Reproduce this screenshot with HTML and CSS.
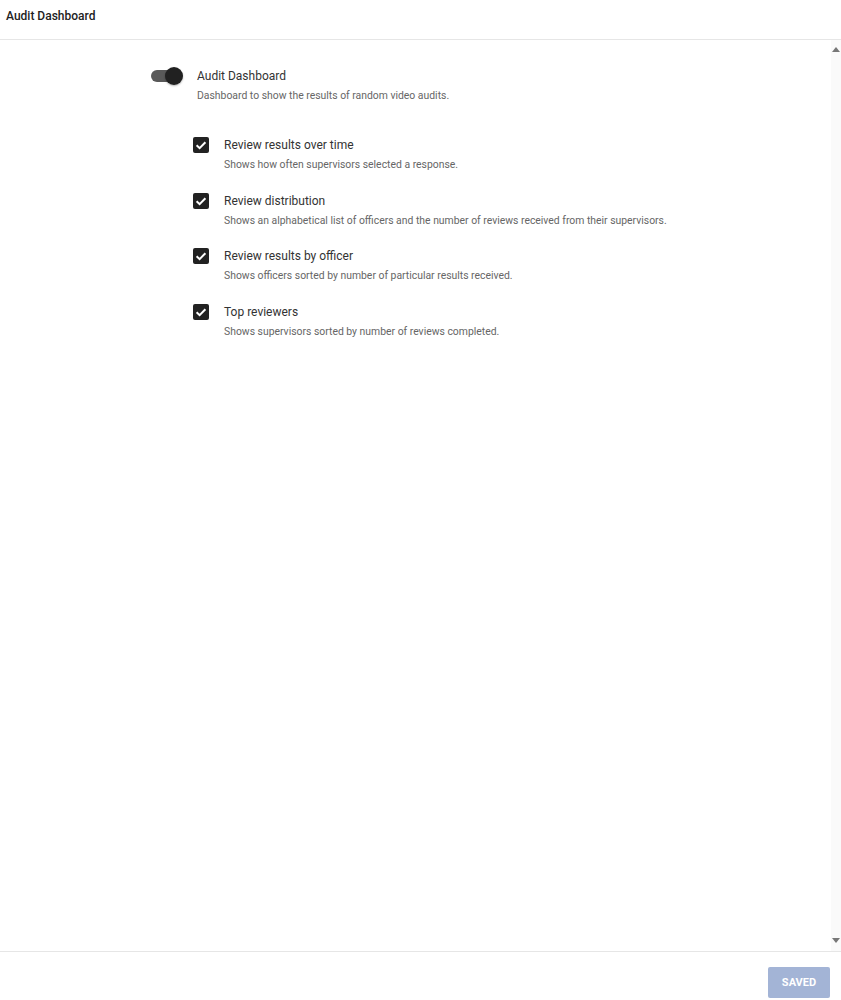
FILE: index.html
```html
<!DOCTYPE html>
<html>
<head>
<meta charset="utf-8">
<link rel="stylesheet" href="styles.css">
</head>
<body>
<div class="app">
  <header class="header"><span class="title">Audit Dashboard</span></header>
  <div class="main">
    <div class="content">
      <div class="toggle-row">
        <div class="toggle"><span class="track"></span><span class="thumb"></span></div>
        <div class="toggle-text">
          <div class="label">Audit Dashboard</div>
          <div class="desc">Dashboard to show the results of random video audits.</div>
        </div>
      </div>
      <div class="list">
        <div class="item">
          <span class="check"><svg viewBox="0 0 16 16" width="16" height="16"><path d="M3.6 8.2 L6.6 11.1 L12.4 5.2" fill="none" stroke="#fff" stroke-width="2"/></svg></span>
          <div class="item-text">
            <div class="label">Review results over time</div>
            <div class="desc">Shows how often supervisors selected a response.</div>
          </div>
        </div>
        <div class="item">
          <span class="check"><svg viewBox="0 0 16 16" width="16" height="16"><path d="M3.6 8.2 L6.6 11.1 L12.4 5.2" fill="none" stroke="#fff" stroke-width="2"/></svg></span>
          <div class="item-text">
            <div class="label">Review distribution</div>
            <div class="desc">Shows an alphabetical list of officers and the number of reviews received from their supervisors.</div>
          </div>
        </div>
        <div class="item">
          <span class="check"><svg viewBox="0 0 16 16" width="16" height="16"><path d="M3.6 8.2 L6.6 11.1 L12.4 5.2" fill="none" stroke="#fff" stroke-width="2"/></svg></span>
          <div class="item-text">
            <div class="label">Review results by officer</div>
            <div class="desc">Shows officers sorted by number of particular results received.</div>
          </div>
        </div>
        <div class="item">
          <span class="check"><svg viewBox="0 0 16 16" width="16" height="16"><path d="M3.6 8.2 L6.6 11.1 L12.4 5.2" fill="none" stroke="#fff" stroke-width="2"/></svg></span>
          <div class="item-text">
            <div class="label">Top reviewers</div>
            <div class="desc">Shows supervisors sorted by number of reviews completed.</div>
          </div>
        </div>
      </div>
    </div>
    <div class="scrollbar">
      <span class="arrow up"></span>
      <span class="arrow down"></span>
    </div>
  </div>
  <footer class="footer"><button class="saved">SAVED</button></footer>
</div>
</body>
</html>
```
FILE: styles.css
```css
html, body {
  margin: 0;
  padding: 0;
  background: #fff;
}
body {
  font-family: Roboto, "Liberation Sans", Arial, sans-serif;
  color: #333;
}
.app {
  display: flex;
  flex-direction: column;
  height: 1000px;
  width: 841px;
}
.header {
  height: 39px;
  border-bottom: 1px solid #e6e6e6;
  box-sizing: content-box;
  padding: 0 6px;
  display: flex;
  align-items: flex-start;
}
.title {
  margin-top: 9px;
  font-size: 12px;
  line-height: 14px;
  font-weight: 500;
  color: #222;
}
.main {
  flex: 1;
  display: flex;
  min-height: 0;
}
.content {
  flex: 1;
  padding: 28px 0 0 151px;
}
.toggle-row {
  display: flex;
  align-items: flex-start;
}
.toggle {
  position: relative;
  width: 33px;
  height: 18px;
  margin-top: -1px;
  margin-right: 13px;
}
.track {
  position: absolute;
  left: 0;
  top: 3px;
  width: 28px;
  height: 12px;
  border-radius: 6px;
  background: #595959;
}
.thumb {
  position: absolute;
  left: 14px;
  top: 0;
  width: 18px;
  height: 18px;
  border-radius: 50%;
  background: #212121;
  box-shadow: 0 1px 2px rgba(0,0,0,0.3);
}
.label {
  font-size: 12px;
  line-height: 16px;
  color: #333;
}
.desc {
  margin-top: 5px;
  font-size: 10.4px;
  line-height: 14px;
  color: #666;
}
.list {
  margin-top: 34px;
  padding-left: 42px;
  display: flex;
  flex-direction: column;
  gap: 20.5px;
}
.item {
  display: flex;
  align-items: flex-start;
}
.check {
  width: 16px;
  height: 16px;
  border-radius: 2px;
  background: #222;
  margin-right: 15px;
  display: block;
}
.check svg {
  display: block;
}
.scrollbar {
  width: 10px;
  background: #fafafa;
  position: relative;
}
.arrow {
  position: absolute;
  left: 1px;
  width: 0;
  height: 0;
  border-left: 4px solid transparent;
  border-right: 4px solid transparent;
}
.arrow.up {
  top: 7px;
  border-bottom: 5px solid #777;
}
.arrow.down {
  bottom: 8px;
  border-top: 5px solid #777;
}
.footer {
  height: 48px;
  border-top: 1px solid #e6e6e6;
  display: flex;
  justify-content: flex-end;
  align-items: flex-start;
  padding-right: 11px;
}
.saved {
  margin-top: 15px;
  width: 62px;
  height: 31px;
  border: none;
  border-radius: 2px;
  background: #a3b4d6;
  color: #fff;
  font-family: Roboto, "Liberation Sans", Arial, sans-serif;
  font-size: 11px;
  font-weight: 700;
  padding: 0;
}
```
